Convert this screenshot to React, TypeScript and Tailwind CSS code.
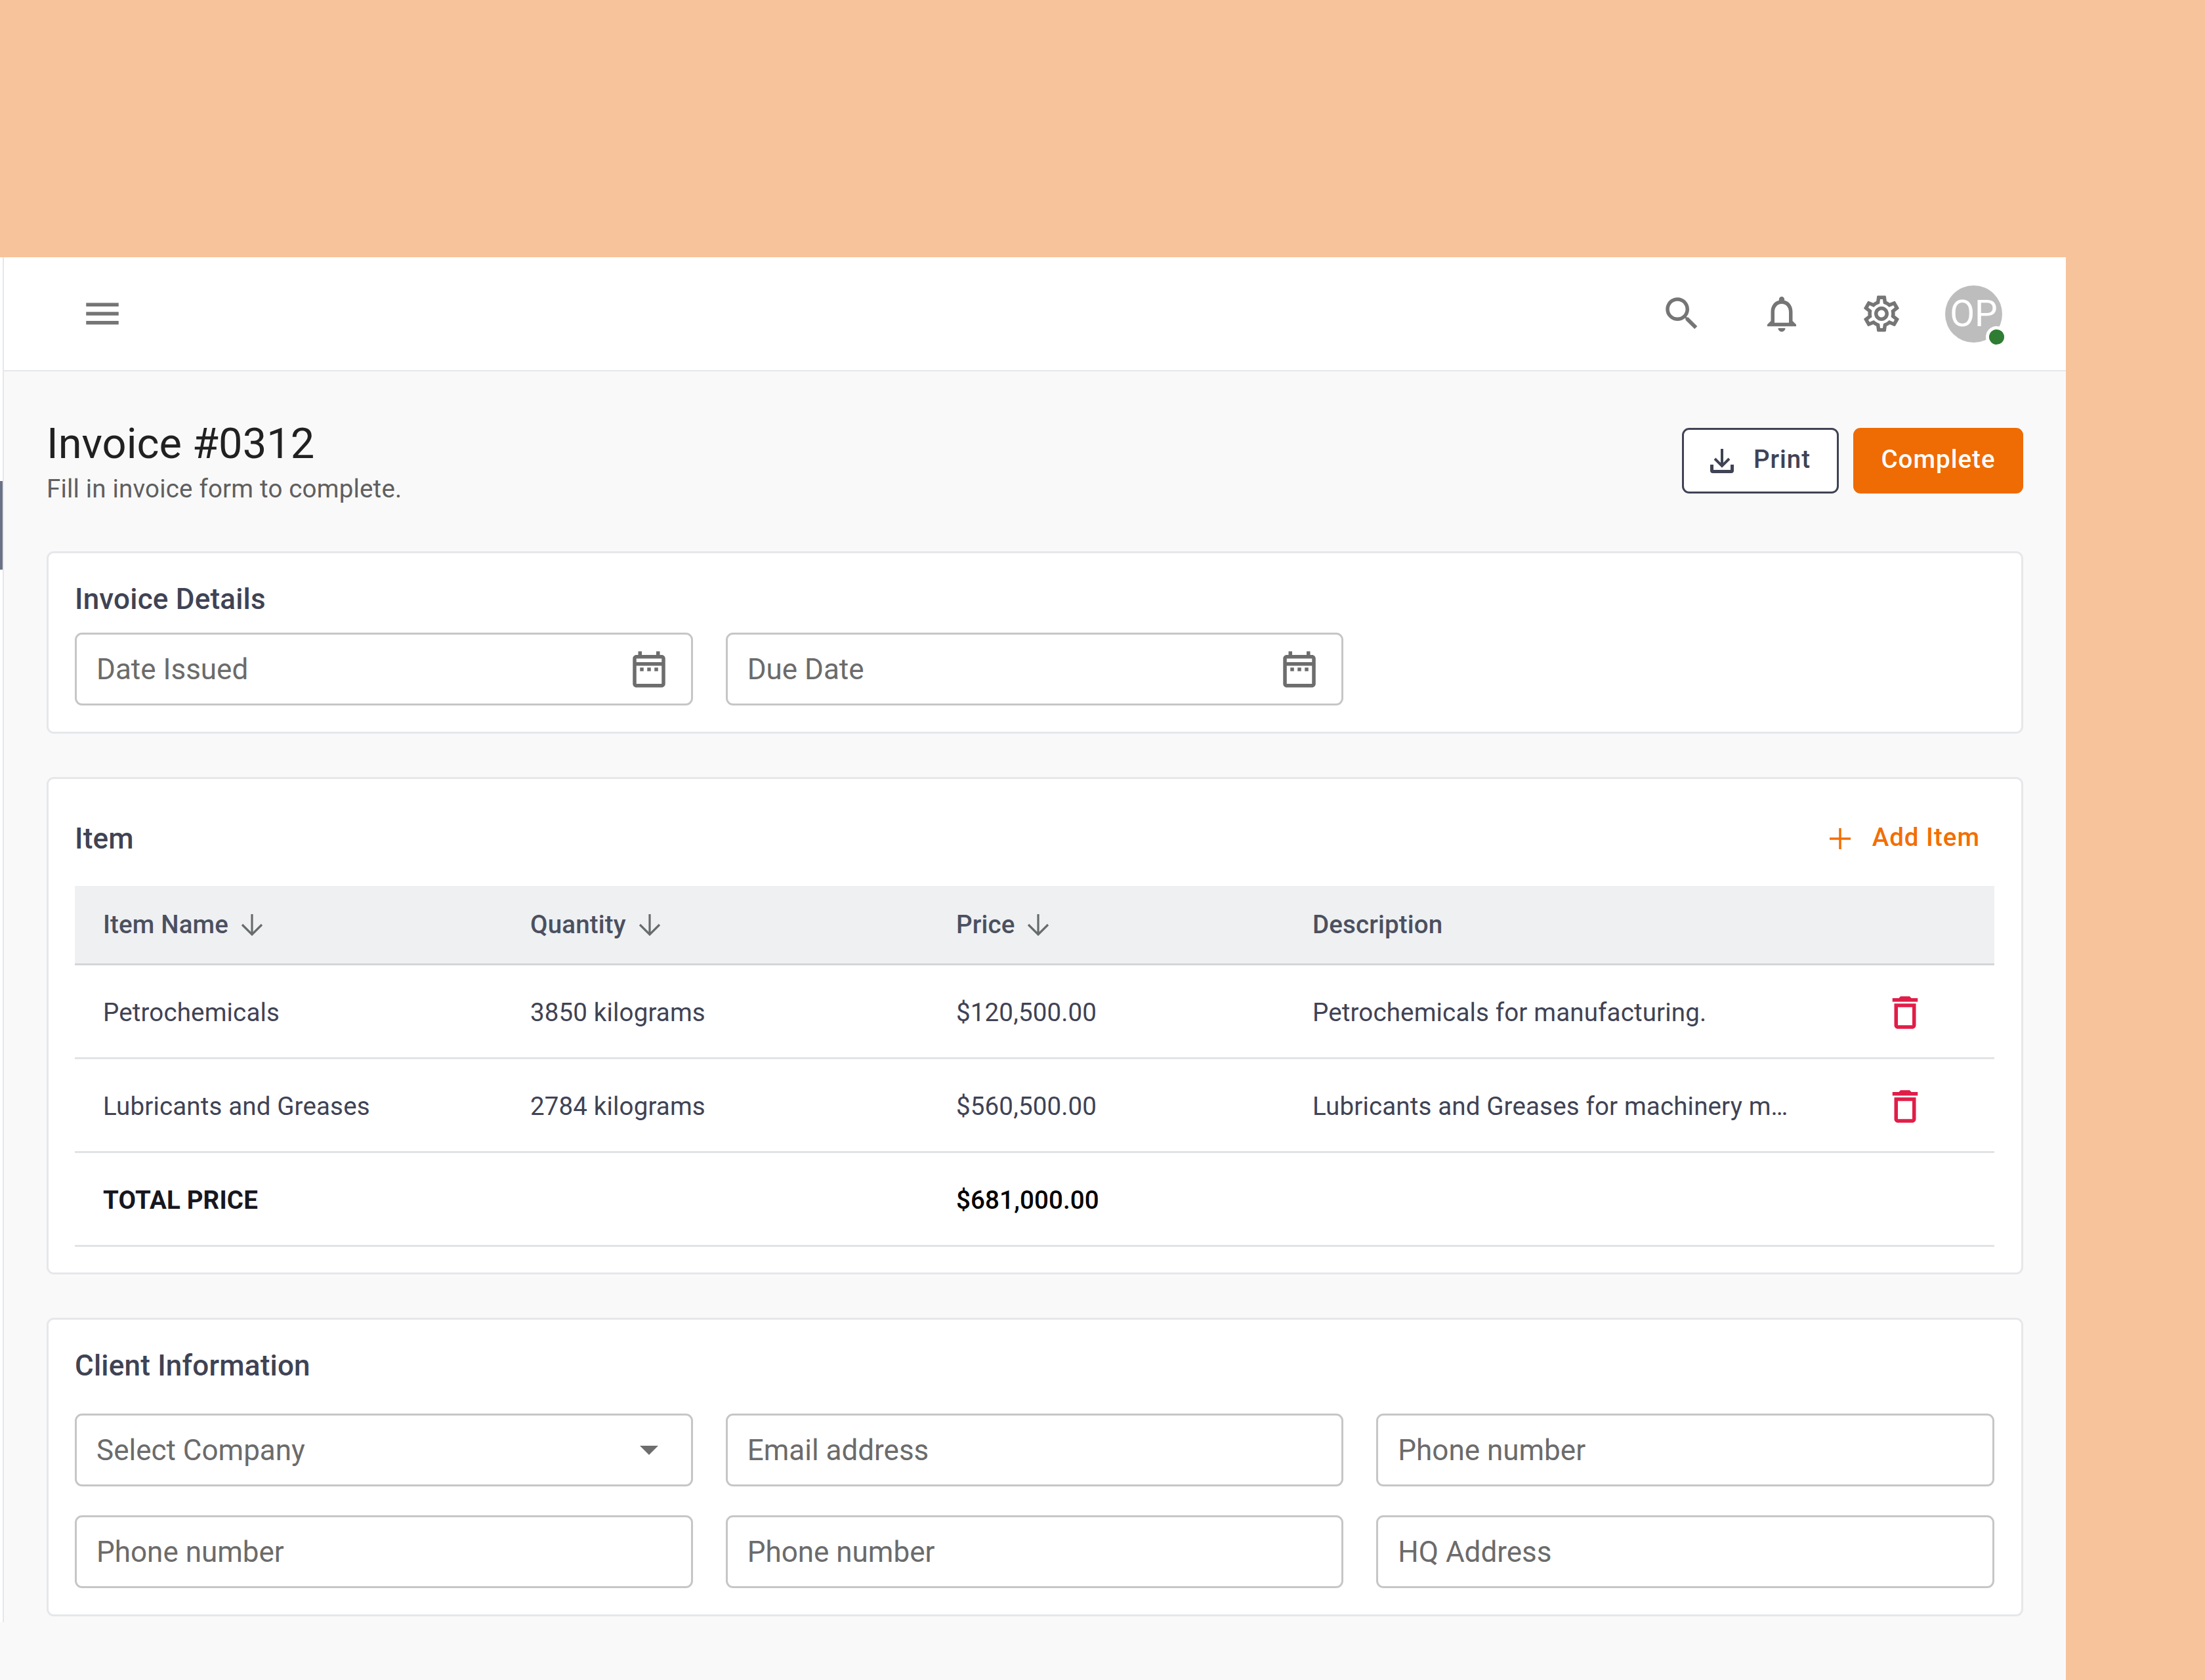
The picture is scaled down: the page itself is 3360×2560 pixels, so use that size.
import type { ReactNode } from 'react';

function MaterialIcon({ d, className }: { d: string; className: string }) {
  return (
    <svg viewBox="0 0 24 24" fill="currentColor" className={className}>
      <path d={d} />
    </svg>
  );
}

const MENU = 'M3 18h18v-2H3v2zm0-5h18v-2H3v2zm0-7v2h18V6H3z';
const SEARCH =
  'M15.5 14h-.79l-.28-.27C15.41 12.59 16 11.11 16 9.5 16 5.91 13.09 3 9.5 3S3 5.91 3 9.5 5.91 16 9.5 16c1.61 0 3.09-.59 4.23-1.57l.27.28v.79l5 4.99L20.49 19l-4.99-5zm-6 0C7.01 14 5 11.99 5 9.5S7.01 5 9.5 5 14 7.01 14 9.5 11.99 14 9.5 14z';
const BELL =
  'M12 22c1.1 0 2-.9 2-2h-4c0 1.1.9 2 2 2zm6-6v-5c0-3.07-1.64-5.64-4.5-6.32V4c0-.83-.67-1.5-1.5-1.5s-1.5.67-1.5 1.5v.68C7.63 5.36 6 7.92 6 11v5l-2 2v1h16v-1l-2-2zm-2 1H8v-6c0-2.48 1.51-4.5 4-4.5s4 2.02 4 4.5v6z';
const GEAR =
  'M19.43 12.98c.04-.32.07-.64.07-.98 0-.34-.03-.66-.07-.98l2.11-1.65c.19-.15.24-.42.12-.64l-2-3.46c-.09-.16-.26-.25-.44-.25-.06 0-.12.01-.17.03l-2.49 1c-.52-.4-1.08-.73-1.69-.98l-.38-2.65C14.46 2.18 14.25 2 14 2h-4c-.25 0-.46.18-.49.42l-.38 2.65c-.61.25-1.17.59-1.69.98l-2.49-1c-.06-.02-.12-.03-.18-.03-.17 0-.34.09-.43.25l-2 3.46c-.13.22-.07.49.12.64l2.11 1.65c-.04.32-.07.65-.07.98 0 .33.03.66.07.98l-2.11 1.65c-.19.15-.24.42-.12.64l2 3.46c.09.16.26.25.44.25.06 0 .12-.01.17-.03l2.49-1c.52.4 1.08.73 1.69.98l.38 2.65c.03.24.24.42.49.42h4c.25 0 .46-.18.49-.42l.38-2.65c.61-.25 1.17-.59 1.69-.98l2.49 1c.06.02.12.03.18.03.17 0 .34-.09.43-.25l2-3.46c.12-.22.07-.49-.12-.64l-2.11-1.65zm-1.98-1.71c.04.31.05.52.05.73 0 .21-.02.43-.05.73l-.14 1.13.89.7 1.08.84-.7 1.21-1.27-.51-1.04-.42-.9.68c-.43.32-.84.56-1.25.73l-1.06.43-.16 1.13-.2 1.35h-1.4l-.19-1.35-.16-1.13-1.06-.43c-.43-.18-.83-.41-1.23-.71l-.91-.7-1.06.43-1.27.51-.7-1.21 1.08-.84.89-.7-.14-1.13c-.03-.31-.05-.54-.05-.74s.02-.43.05-.73l.14-1.13-.89-.7-1.08-.84.7-1.21 1.27.51 1.04.42.9-.68c.43-.32.84-.56 1.25-.73l1.06-.43.16-1.13.2-1.35h1.39l.19 1.35.16 1.13 1.06.43c.43.18.83.41 1.23.71l.91.7 1.06-.43 1.27-.51.7 1.21-1.07.85-.89.7.14 1.13zM12 8c-2.21 0-4 1.79-4 4s1.79 4 4 4 4-1.79 4-4-1.79-4-4-4zm0 6c-1.1 0-2-.9-2-2s.9-2 2-2 2 .9 2 2-.9 2-2 2z';
const CALENDAR =
  'M7 11h2v2H7v-2zm14-5v14c0 1.1-.9 2-2 2H5c-1.11 0-2-.9-2-2l.01-14c0-1.1.88-2 1.99-2h1V2h2v2h8V2h2v2h1c1.1 0 2 .9 2 2zM5 8h14V6H5v2zm14 12V10H5v10h14zm-4-7h2v-2h-2v2zm-4 0h2v-2h-2v2z';
const TRASH =
  'M16 9v10H8V9h8m-1.5-6h-5l-1 1H5v2h14V4h-3.5l-1-1zM18 7H6v12c0 1.1.9 2 2 2h8c1.1 0 2-.9 2-2V7z';

function SortArrow() {
  return (
    <svg viewBox="0 0 34 34" fill="none" stroke="#686c6c" strokeWidth="3.2" className="ml-[19px] h-[34px] w-[34px]">
      <path d="M17 1v30M2 17l15 15 15-15" />
    </svg>
  );
}

function Card({ className, children }: { className: string; children: ReactNode }) {
  return (
    <section className={`rounded-[11px] border-[3px] border-[#e6e7eb] bg-white pr-[41px] pl-[40px] ${className}`}>{children}</section>
  );
}

function CardTitle({ children }: { children: ReactNode }) {
  return <h2 className="text-[44px] leading-[60px] font-medium tracking-[0.2px] text-[#3f4354]">{children}</h2>;
}

function Field({ label, icon }: { label: string; icon?: ReactNode }) {
  return (
    <div className="flex h-[111px] items-center justify-between rounded-[11px] border-[3px] border-[#c6c6c6] bg-white pr-[31px] pl-[30px]">
      <span className="text-[44px] text-[#6b6b6b]">{label}</span>
      {icon}
    </div>
  );
}

const calendar = <MaterialIcon d={CALENDAR} className="h-[66px] w-[66px] text-[#6d6d6d]" />;
const rowGrid = 'grid grid-cols-[651px_649px_543px_885px_1fr] items-center pl-[43px] tracking-[0.15px]';

export default function App() {
  return (
    <div className="h-[2560px] w-[3360px] overflow-hidden bg-[#f7c39b] pt-[392px] font-['Roboto',sans-serif]">
      <div className="flex h-[2168px] w-[3148px] items-start bg-[#f9f9f9]">
        <aside className="h-[2080px] w-[6px] shrink-0 border-r-2 border-[#e5e7eb] bg-white pt-[341px]">
          <div className="h-[135px] w-[4px] bg-[#6b7287]" />
        </aside>

        <div className="min-w-0 flex-1">
          <header className="flex h-[174px] items-center justify-between border-b-2 border-[#e5e7eb] bg-white pr-[97px] pl-[117px]">
            <MaterialIcon d={MENU} className="h-[66px] w-[66px] text-[#757575]" />
            <div className="flex items-center">
              <MaterialIcon d={SEARCH} className="h-[66px] w-[66px] text-[#757575]" />
              <MaterialIcon d={BELL} className="ml-[86px] h-[66px] w-[66px] text-[#757575]" />
              <MaterialIcon d={GEAR} className="ml-[86px] h-[66px] w-[66px] text-[#757575]" />
              <div className="relative ml-[64px] flex h-[87px] w-[87px] items-center justify-center rounded-full bg-[#bdbdbd] text-[55px] leading-none text-white">
                OP
                <span className="absolute right-[-8px] bottom-[-8px] h-[33px] w-[33px] rounded-full border-[5px] border-white bg-[#2e7d32]" />
              </div>
            </div>
          </header>

          <main className="pt-[86px] pr-[65px] pl-[65px]">
            <div className="mb-[69px] flex items-start justify-between">
              <div>
                <h1 className="-mt-[16px] text-[65px] leading-[81px] text-[#212121]">Invoice #0312</h1>
                <p className="mt-[2px] text-[38.5px] leading-[52px] tracking-[0.18px] text-[#5f5f5f]">Fill in invoice form to complete.</p>
              </div>
              <div className="flex gap-[22px]">
                <button
                  type="button"
                  className="flex h-[100px] w-[239px] items-center justify-center gap-[30px] rounded-[11px] border-[3px] border-[#3f4354] bg-white pb-[4px] text-[38.5px] font-medium tracking-[1px] text-[#3f4354]"
                >
                  <svg viewBox="0 0 36 37" fill="none" stroke="#3f4354" className="mt-[4px] h-[37px] w-[36px]">
                    <path strokeWidth="4" d="M18 0v26M7 15l11 11 11-11" />
                    <path strokeWidth="5" d="M2.5 24v9c0 1 .5 1.500 1.500 1.500h28c1 0 1.500-.5 1.500-1.500v-9" />
                  </svg>
                  Print
                </button>
                <button
                  type="button"
                  className="h-[100px] w-[259px] rounded-[11px] bg-[#ef6b03] pb-[4px] text-[38.5px] font-medium tracking-[1px] text-white"
                >
                  Complete
                </button>
              </div>
            </div>

            <div className="flex flex-col gap-[66px]">
              <Card className="h-[278px] pt-[40px]">
                <CardTitle>Invoice Details</CardTitle>
                <div className="mt-[21px] grid grid-cols-3 gap-x-[50px]">
                  <Field label="Date Issued" icon={calendar} />
                  <Field label="Due Date" icon={calendar} />
                </div>
              </Card>

              <Card className="h-[758px] pt-[61px]">
                <div className="flex h-[60px] items-center justify-between pr-[22px]">
                  <CardTitle>Item</CardTitle>
                  <button type="button" className="flex items-center gap-[33px] pb-[4px] text-[38.5px] font-medium tracking-[1px] text-[#f26e00]">
                    <svg viewBox="0 0 32 32" fill="none" stroke="currentColor" strokeWidth="3.500" className="mt-[3px] h-[32px] w-[32px]">
                      <path d="M16 0v32M0 16h32" />
                    </svg>
                    Add Item
                  </button>
                </div>

                <div className={`${rowGrid} mt-[42px] h-[121px] border-b-[3px] border-[#d4d5d9] bg-[#eff0f2] text-[38.5px] font-medium text-[#4b5060]`}>
                  <div className="flex items-center">Item Name<SortArrow /></div>
                  <div className="flex items-center">Quantity<SortArrow /></div>
                  <div className="flex items-center">Price<SortArrow /></div>
                  <div>Description</div>
                </div>

                <div className={`${rowGrid} h-[143px] border-b-[3px] border-[#e2e3e5] pt-[3px] text-[38.5px] text-[#3f4354]`}>
                  <div>Petrochemicals</div>
                  <div>3850 kilograms</div>
                  <div>$120,500.00</div>
                  <div>Petrochemicals for manufacturing.</div>
                  <MaterialIcon d={TRASH} className="h-[66px] w-[66px] -translate-x-[15px] text-[#e11d48]" />
                </div>
                <div className={`${rowGrid} h-[143px] border-b-[3px] border-[#e2e3e5] pt-[3px] text-[38.5px] text-[#3f4354]`}>
                  <div>Lubricants and Greases</div>
                  <div>2784 kilograms</div>
                  <div>$560,500.00</div>
                  <div>Lubricants and Greases for machinery m…</div>
                  <MaterialIcon d={TRASH} className="h-[66px] w-[66px] -translate-x-[15px] text-[#e11d48]" />
                </div>
                <div className={`${rowGrid} h-[143px] border-b-[3px] border-[#e2e3e5] pt-[3px] text-[38.5px] font-bold text-[#17171f]`}>
                  <div>TOTAL PRICE</div>
                  <div />
                  <div className="font-medium text-black">$681,000.00</div>
                </div>
              </Card>

              <Card className="h-[455px] pt-[40px]">
                <CardTitle>Client Information</CardTitle>
                <div className="mt-[43px] grid grid-cols-3 gap-x-[50px] gap-y-[44px]">
                  <Field
                    label="Select Company"
                    icon={
                      <svg viewBox="0 0 28 14" fill="#6d6d6d" className="mr-[19px] h-[14px] w-[28px]">
                        <path d="M0 0h28L14 14z" />
                      </svg>
                    }
                  />
                  <Field label="Email address" />
                  <Field label="Phone number" />
                  <Field label="Phone number" />
                  <Field label="Phone number" />
                  <Field label="HQ Address" />
                </div>
              </Card>
            </div>
          </main>
        </div>
      </div>
    </div>
  );
}
